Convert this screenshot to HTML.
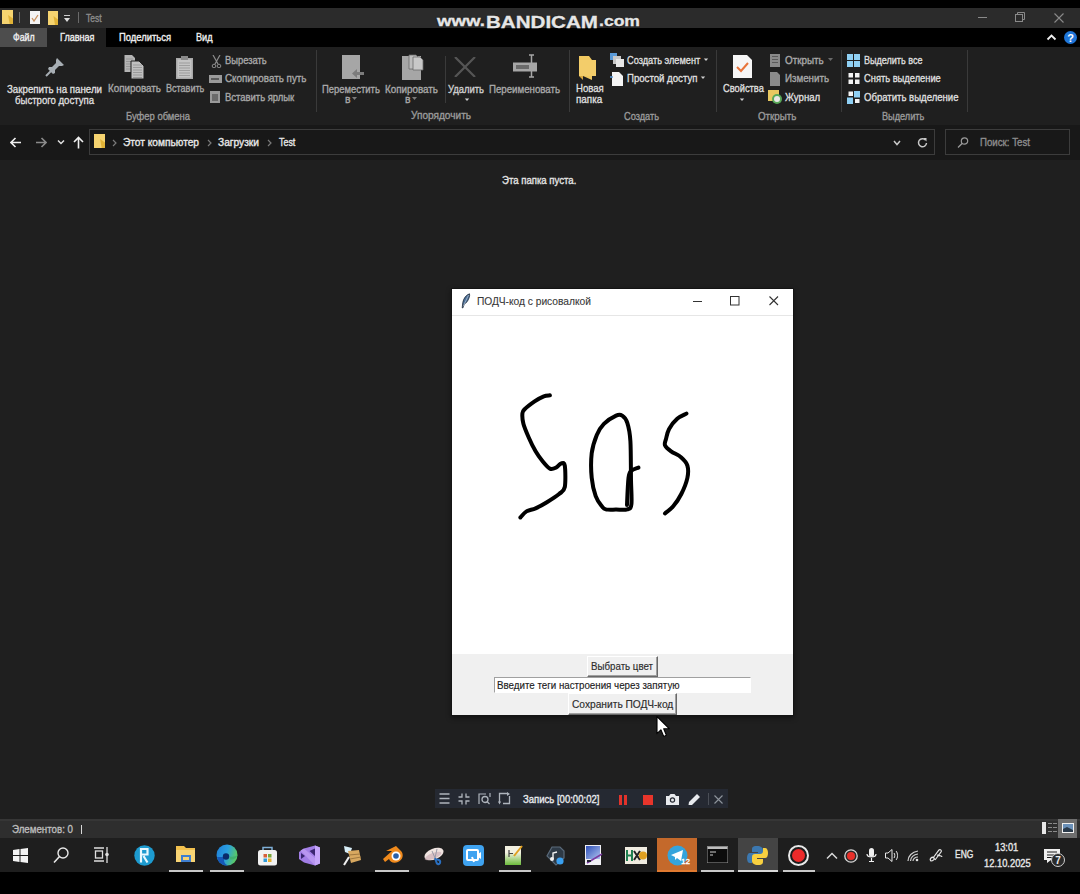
<!DOCTYPE html><html><head><meta charset="utf-8"><style>
html,body{margin:0;padding:0;width:1080px;height:894px;overflow:hidden;background:#191919;}
body{position:relative;font-family:"Liberation Sans",sans-serif;}
div,svg{position:absolute;}
.t{white-space:nowrap;line-height:1;transform-origin:0 0;-webkit-text-stroke:0.35px currentColor;}
</style></head><body>
<div style="left:0px;top:0px;width:1080px;height:8px;background:#000;"></div>
<div style="left:0px;top:8px;width:1080px;height:20px;background:#2b2b2b;"></div>
<div style="left:0px;top:28px;width:1080px;height:19px;background:#000;"></div>
<div style="left:0px;top:28px;width:47px;height:19px;background:#4d4d4d;"></div>
<div style="left:47px;top:28px;width:59px;height:19px;background:#1f1f1f;"></div>
<div style="left:0px;top:47px;width:1080px;height:78px;background:#1f1f1f;"></div>
<div style="left:0px;top:125px;width:1080px;height:35px;background:#181818;"></div>
<div style="left:0px;top:160px;width:1080px;height:659px;background:#1f1f1f;"></div>
<div style="left:0px;top:819px;width:1080px;height:19px;background:#2e2e2e;"></div>
<div style="left:0px;top:819px;width:1080px;height:2px;background:#363636;"></div>
<div style="left:0px;top:838px;width:1080px;height:34px;background:#1e1e1e;"></div>
<div style="left:0px;top:872px;width:1080px;height:22px;background:#000;"></div>
<svg style="left:2px;top:10px;" width="11" height="14" viewBox="0 0 11 14"><rect x="0" y="0" width="11" height="14" fill="#f6d470"/><path d="M6.050000000000001 4.8999999999999995 L11 8.4 L11 14 L7.699999999999999 14 Z" fill="#d9a520" opacity="0.7"/></svg>
<div style="left:19px;top:12px;width:1px;height:11px;background:#6a6a6a;"></div>
<svg style="left:30px;top:11px;" width="10" height="13" viewBox="0 0 10 13"><rect x="0" y="0" width="10" height="13" fill="#f4f4f4"/><path d="M2 7 L4 10 L8 4" stroke="#c89060" stroke-width="1.3" fill="none"/></svg>
<svg style="left:48px;top:11px;" width="10" height="14" viewBox="0 0 10 14"><rect x="0" y="0" width="10" height="14" fill="#f6d470"/><path d="M5.5 4.8999999999999995 L10 8.4 L10 14 L7.0 14 Z" fill="#d9a520" opacity="0.7"/></svg>
<svg style="left:63px;top:14px;" width="8" height="9" viewBox="0 0 8 9"><rect x="1" y="1" width="6" height="1" fill="#ccc"/><path d="M1 4 L7 4 L4 8 Z" fill="#ddd"/></svg>
<div style="left:78px;top:12px;width:1px;height:11px;background:#6a6a6a;"></div>
<div class="t" style="left:86px;top:12.91px;font-size:10.5px;color:#8c8c8c;transform:scaleX(0.8049);">Test</div>
<div style="left:978px;top:17px;width:9px;height:1px;background:#8a8a8a;"></div>
<svg style="left:1014px;top:11px;" width="12" height="11" viewBox="0 0 12 11"><rect x="1.5" y="3.5" width="7" height="7" fill="none" stroke="#8a8a8a"/><path d="M3.5 3.5 V1.5 H10.5 V8.5 H8.5" fill="none" stroke="#8a8a8a"/></svg>
<svg style="left:1054px;top:13px;" width="10" height="10" viewBox="0 0 10 10"><path d="M0.5 0.5 L9.5 9.5 M9.5 0.5 L0.5 9.5" stroke="#8a8a8a" stroke-width="1.1"/></svg>
<div class="t" style="left:436.5px;top:15.48px;font-size:13.85px;color:#e6e6e6;font-weight:bold;transform:scaleX(1.3462);text-shadow:0 0 1px #000,0 0 1px #000;">www.</div>
<div class="t" style="left:485.5px;top:13.62px;font-size:16.04px;color:#e6e6e6;font-weight:bold;transform:scaleX(1.2827);text-shadow:0 0 1px #000,0 0 1px #000;">BANDICAM</div>
<div class="t" style="left:599px;top:15.48px;font-size:13.85px;color:#e6e6e6;font-weight:bold;transform:scaleX(1.2683);text-shadow:0 0 1px #000,0 0 1px #000;">.com</div>
<div class="t" style="left:12.6px;top:31.71px;font-size:10.5px;color:#f0f0f0;transform:scaleX(0.8406);">Файл</div>
<div class="t" style="left:59.6px;top:31.71px;font-size:10.5px;color:#f0f0f0;transform:scaleX(0.8608);">Главная</div>
<div class="t" style="left:119.4px;top:31.71px;font-size:10.5px;color:#f0f0f0;transform:scaleX(0.8969);">Поделиться</div>
<div class="t" style="left:196px;top:31.71px;font-size:10.5px;color:#f0f0f0;transform:scaleX(0.8686);">Вид</div>
<svg style="left:1046px;top:33px;" width="11" height="8" viewBox="0 0 11 8"><path d="M1.5 6.5 L5.5 2.5 L9.5 6.5" stroke="#f0f0f0" stroke-width="1.8" fill="none"/></svg>
<svg style="left:1064px;top:31px;" width="13" height="13" viewBox="0 0 13 13"><circle cx="6.5" cy="6.5" r="6.5" fill="#1f75d8"/><text x="6.5" y="10.5" text-anchor="middle" font-family="Liberation Sans" font-weight="bold" font-size="11" fill="#fff">?</text></svg>
<div style="left:316px;top:50px;width:1px;height:62px;background:#3a3a3a;"></div>
<div style="left:569px;top:50px;width:1px;height:62px;background:#3a3a3a;"></div>
<div style="left:716px;top:50px;width:1px;height:62px;background:#3a3a3a;"></div>
<div style="left:841px;top:50px;width:1px;height:62px;background:#3a3a3a;"></div>
<div style="left:967px;top:50px;width:1px;height:62px;background:#3a3a3a;"></div>
<div style="left:445px;top:56px;width:1px;height:47px;background:#3a3a3a;"></div>
<svg style="left:44px;top:56px;" width="22" height="22" viewBox="0 0 22 22"><path d="M13 2 L20 9 L18 10 L15 10 L11 14 L11 17 L9 18 L4 13 L5 11 L8 11 L12 7 L12 4 Z" fill="#a7aeb4"/><path d="M7 15 L2 20" stroke="#a7aeb4" stroke-width="2"/></svg>
<div class="t" style="left:6.7px;top:83.81px;font-size:10.5px;color:#dedede;transform:scaleX(0.9263);">Закрепить на панели</div>
<div class="t" style="left:15px;top:94.71px;font-size:10.5px;color:#dedede;transform:scaleX(0.9126);">быстрого доступа</div>
<svg style="left:124px;top:55px;" width="21" height="25" viewBox="0 0 21 25"><path d="M0.5 0 H8 L11 3 V17 H0.5 Z" fill="#b4b4b4"/><path d="M2 4 H9" stroke="#8a8a8a" stroke-width="0.7"/><path d="M2 6.5 H9" stroke="#8a8a8a" stroke-width="0.7"/><path d="M2 9 H9" stroke="#8a8a8a" stroke-width="0.7"/><path d="M2 11.5 H9" stroke="#8a8a8a" stroke-width="0.7"/><path d="M2 14 H9" stroke="#8a8a8a" stroke-width="0.7"/><path d="M7 6 H15 L20 11 V24 H7 Z" fill="#c0c0c0" stroke="#1f1f1f" stroke-width="1"/><path d="M9 10 H18" stroke="#8a8a8a" stroke-width="0.7"/><path d="M9 12.5 H18" stroke="#8a8a8a" stroke-width="0.7"/><path d="M9 15 H18" stroke="#8a8a8a" stroke-width="0.7"/><path d="M9 17.5 H18" stroke="#8a8a8a" stroke-width="0.7"/><path d="M9 20 H18" stroke="#8a8a8a" stroke-width="0.7"/><path d="M9 22.5 H18" stroke="#8a8a8a" stroke-width="0.7"/></svg>
<div class="t" style="left:107.7px;top:83.01px;font-size:10.5px;color:#a8a8a8;transform:scaleX(0.9375);">Копировать</div>
<svg style="left:176px;top:56px;" width="17" height="23" viewBox="0 0 17 23"><rect x="0" y="2" width="17" height="21" fill="#a9a9a9"/><rect x="1.5" y="3.5" width="14" height="18" fill="#c4c4c4"/><path d="M3 7 H14" stroke="#8e8e8e" stroke-width="0.7"/><path d="M3 9.5 H14" stroke="#8e8e8e" stroke-width="0.7"/><path d="M3 12 H14" stroke="#8e8e8e" stroke-width="0.7"/><path d="M3 14.5 H14" stroke="#8e8e8e" stroke-width="0.7"/><path d="M3 17 H14" stroke="#8e8e8e" stroke-width="0.7"/><path d="M3 19.5 H14" stroke="#8e8e8e" stroke-width="0.7"/><rect x="5" y="0" width="7" height="4" fill="#8a8a8a"/></svg>
<div class="t" style="left:165.6px;top:83.01px;font-size:10.5px;color:#a8a8a8;transform:scaleX(0.8605);">Вставить</div>
<svg style="left:211px;top:55px;" width="11" height="13" viewBox="0 0 11 13"><path d="M2 0 L7 9 M9 0 L4 9" stroke="#8c8c8c" stroke-width="1.2"/><circle cx="3" cy="11" r="1.8" fill="none" stroke="#8c8c8c"/><circle cx="8" cy="11" r="1.8" fill="none" stroke="#8c8c8c"/></svg>
<div class="t" style="left:225.3px;top:55.11px;font-size:10.5px;color:#a8a8a8;transform:scaleX(0.8930);">Вырезать</div>
<svg style="left:209px;top:75px;" width="13" height="8" viewBox="0 0 13 8"><rect x="0" y="0" width="13" height="8" fill="#9a9a9a"/><rect x="2" y="3" width="8" height="2" fill="#5a5a5a"/></svg>
<div class="t" style="left:225.3px;top:73.41px;font-size:10.5px;color:#a8a8a8;transform:scaleX(0.9385);">Скопировать путь</div>
<svg style="left:210px;top:91px;" width="10" height="12" viewBox="0 0 10 12"><rect x="0" y="0" width="10" height="12" fill="#9a9a9a"/><rect x="2" y="3" width="6" height="7" fill="#6a6a6a"/></svg>
<div class="t" style="left:225.3px;top:91.71px;font-size:10.5px;color:#a8a8a8;transform:scaleX(0.9004);">Вставить ярлык</div>
<div class="t" style="left:125.5px;top:111.11px;font-size:10.5px;color:#9a9a9a;transform:scaleX(0.8971);">Буфер обмена</div>
<svg style="left:341px;top:55px;" width="24" height="25" viewBox="0 0 24 25"><rect x="1" y="0" width="18" height="24" fill="#a6a6a6"/><path d="M23 17 H16 V14 L11 18.5 L16 23 V20 H23 Z" fill="#7c7c7c"/></svg>
<div class="t" style="left:322px;top:83.81px;font-size:10.5px;color:#a8a8a8;transform:scaleX(0.8985);">Переместить</div>
<div class="t" style="left:345px;top:93.51px;font-size:10.5px;color:#a8a8a8;transform:scaleX(0.9860);">в</div>
<svg style="left:352px;top:97px;" width="5" height="4" viewBox="0 0 5 4"><path d="M0 0 H5 L2.5 3 Z" fill="#7a7a7a"/></svg>
<svg style="left:401px;top:54px;" width="23" height="26" viewBox="0 0 23 26"><rect x="1" y="2" width="19" height="24" fill="#a6a6a6"/><path d="M8 1 H15 L18 4 V15 H8 Z" fill="#bdbdbd" stroke="#6a6a6a" stroke-width="0.8"/><path d="M12 3 H19 L22 6 V16 H12 Z" fill="#c8c8c8" stroke="#6a6a6a" stroke-width="0.8"/></svg>
<div class="t" style="left:384.6px;top:83.81px;font-size:10.5px;color:#a8a8a8;transform:scaleX(0.9375);">Копировать</div>
<div class="t" style="left:405px;top:93.51px;font-size:10.5px;color:#a8a8a8;transform:scaleX(0.9860);">в</div>
<svg style="left:412px;top:97px;" width="5" height="4" viewBox="0 0 5 4"><path d="M0 0 H5 L2.5 3 Z" fill="#7a7a7a"/></svg>
<svg style="left:454px;top:57px;" width="22" height="20" viewBox="0 0 22 20"><path d="M1 0 L21 20 M21 0 L1 20" stroke="#555" stroke-width="2.2"/></svg>
<div class="t" style="left:448.4px;top:83.81px;font-size:10.5px;color:#cfcfcf;transform:scaleX(0.8980);">Удалить</div>
<svg style="left:464px;top:98px;" width="6" height="4" viewBox="0 0 6 4"><path d="M0.8 0.5 H5.2 L3 3 Z" fill="#d0d0d0"/></svg>
<svg style="left:512px;top:54px;" width="26" height="24" viewBox="0 0 26 24"><rect x="1" y="8.5" width="24" height="9" fill="#a6a6a6"/><rect x="4" y="11" width="13" height="4" fill="#6a6a6a"/><path d="M17 1 H22 M19.5 1 V23 M17 23 H22" stroke="#a6a6a6" stroke-width="1.5"/></svg>
<div class="t" style="left:489.3px;top:83.81px;font-size:10.5px;color:#a8a8a8;transform:scaleX(0.9224);">Переименовать</div>
<div class="t" style="left:411px;top:110.31px;font-size:10.5px;color:#9a9a9a;transform:scaleX(0.9603);">Упорядочить</div>
<svg style="left:579px;top:56px;" width="18" height="24" viewBox="0 0 18 24"><path d="M0 0 H10 L13 4 V24 L4 20 H0 Z" fill="#f0c860"/><rect x="0" y="4" width="17" height="16" fill="#f3cd6a"/><path d="M0 20 L4 24 V20 Z" fill="#d8a840"/></svg>
<div class="t" style="left:575.7px;top:83.31px;font-size:10.5px;color:#dedede;transform:scaleX(0.9142);">Новая</div>
<div class="t" style="left:575.7px;top:94.01px;font-size:10.5px;color:#dedede;transform:scaleX(0.9435);">папка</div>
<svg style="left:610px;top:53px;" width="14" height="14" viewBox="0 0 14 14"><rect x="0" y="0" width="7" height="7" fill="#5a9ad8"/><rect x="3" y="3" width="8" height="8" fill="#c8c8c8"/><rect x="6" y="6" width="8" height="8" fill="#e8e8e8"/></svg>
<div class="t" style="left:626.8px;top:54.71px;font-size:10.5px;color:#dedede;transform:scaleX(0.8758);">Создать элемент</div>
<svg style="left:703px;top:58px;" width="6" height="4" viewBox="0 0 6 4"><path d="M0.8 0.5 H5.2 L3 3 Z" fill="#d0d0d0"/></svg>
<svg style="left:610px;top:72px;" width="13" height="14" viewBox="0 0 13 14"><path d="M2 0 H9 L13 4 V14 H2 Z" fill="#f4f4f4"/><path d="M0 5 H3" stroke="#5a9ad8" stroke-width="1.5"/></svg>
<div class="t" style="left:626.8px;top:72.71px;font-size:10.5px;color:#dedede;transform:scaleX(0.9159);">Простой доступ</div>
<svg style="left:700px;top:76px;" width="6" height="4" viewBox="0 0 6 4"><path d="M0.8 0.5 H5.2 L3 3 Z" fill="#d0d0d0"/></svg>
<div class="t" style="left:624.3px;top:110.61px;font-size:10.5px;color:#9a9a9a;transform:scaleX(0.8772);">Создать</div>
<svg style="left:733px;top:55px;" width="19" height="23" viewBox="0 0 19 23"><path d="M0 0 H14 L19 5 V23 H0 Z" fill="#f6f6f6"/><path d="M4 12 L8 16 L15 8" stroke="#e8743b" stroke-width="2" fill="none"/></svg>
<div class="t" style="left:722.5px;top:83.31px;font-size:10.5px;color:#dedede;transform:scaleX(0.8849);">Свойства</div>
<svg style="left:739px;top:98px;" width="6" height="4" viewBox="0 0 6 4"><path d="M0.8 0.5 H5.2 L3 3 Z" fill="#d0d0d0"/></svg>
<svg style="left:770px;top:54px;" width="11" height="13" viewBox="0 0 11 13"><rect x="0" y="0" width="10" height="13" fill="#8a8a8a"/><rect x="2" y="2" width="6" height="1" fill="#5a5a5a"/><rect x="2" y="5" width="6" height="1" fill="#5a5a5a"/><rect x="2" y="8" width="6" height="1" fill="#5a5a5a"/></svg>
<div class="t" style="left:784.9px;top:55.11px;font-size:10.5px;color:#a8a8a8;transform:scaleX(0.9385);">Открыть</div>
<svg style="left:828px;top:58px;" width="5" height="3" viewBox="0 0 5 3"><path d="M0 0 H5 L2.5 3 Z" fill="#6a6a6a"/></svg>
<svg style="left:770px;top:72px;" width="11" height="14" viewBox="0 0 11 14"><path d="M0 0 H7 L10 3 V14 H0 Z" fill="#8a8a8a"/></svg>
<div class="t" style="left:784.9px;top:73.41px;font-size:10.5px;color:#a8a8a8;transform:scaleX(0.9290);">Изменить</div>
<svg style="left:768px;top:90px;" width="15" height="14" viewBox="0 0 15 14"><rect x="0" y="0" width="11" height="11" fill="#e8c860"/><circle cx="9" cy="9" r="5" fill="#58a858"/><circle cx="9" cy="9" r="3" fill="#e8e8e8"/></svg>
<div class="t" style="left:784.9px;top:91.71px;font-size:10.5px;color:#dedede;transform:scaleX(0.9187);">Журнал</div>
<div class="t" style="left:758.4px;top:111.11px;font-size:10.5px;color:#9a9a9a;transform:scaleX(0.9288);">Открыть</div>
<svg style="left:847px;top:54px;" width="14" height="14" viewBox="0 0 14 14"><rect x="0" y="0" width="6" height="6" fill="#8fd0f4"/><rect x="7" y="0" width="6" height="6" fill="#8fd0f4"/><rect x="0" y="7" width="6" height="6" fill="#8fd0f4"/><rect x="7" y="7" width="6" height="6" fill="#8fd0f4"/></svg>
<div class="t" style="left:863.5px;top:55.11px;font-size:10.5px;color:#dedede;transform:scaleX(0.8615);">Выделить все</div>
<svg style="left:847px;top:72px;" width="14" height="14" viewBox="0 0 14 14"><rect x="1.5" y="1" width="4.5" height="4.5" fill="#f4f4f4"/><rect x="8" y="1" width="4.5" height="4.5" fill="#f4f4f4"/><rect x="1.5" y="7.5" width="4.5" height="4.5" fill="#f4f4f4"/><rect x="8" y="7.5" width="4.5" height="4.5" fill="#f4f4f4"/></svg>
<div class="t" style="left:863.5px;top:73.41px;font-size:10.5px;color:#dedede;transform:scaleX(0.8881);">Снять выделение</div>
<svg style="left:847px;top:91px;" width="14" height="14" viewBox="0 0 14 14"><rect x="1.5" y="0.5" width="4.5" height="4.5" fill="#f4f4f4"/><rect x="7" y="0" width="6" height="6.5" fill="#8fd0f4"/><rect x="0" y="6.5" width="6" height="6.5" fill="#8fd0f4"/><rect x="8" y="8" width="4.5" height="4" fill="#f4f4f4"/></svg>
<div class="t" style="left:863.5px;top:91.71px;font-size:10.5px;color:#dedede;transform:scaleX(0.9112);">Обратить выделение</div>
<div class="t" style="left:881.8px;top:111.11px;font-size:10.5px;color:#9a9a9a;transform:scaleX(0.8712);">Выделить</div>
<svg style="left:10px;top:137px;" width="12" height="11" viewBox="0 0 12 11"><path d="M1 5.5 H11 M5.5 1 L1 5.5 L5.5 10" stroke="#f0f0f0" stroke-width="1.6" fill="none"/></svg>
<svg style="left:35px;top:137px;" width="12" height="11" viewBox="0 0 12 11"><path d="M11 5.5 H1 M6.5 1 L11 5.5 L6.5 10" stroke="#8a8a8a" stroke-width="1.6" fill="none"/></svg>
<svg style="left:57px;top:139px;" width="8" height="6" viewBox="0 0 8 6"><path d="M1 1.5 L4 4.5 L7 1.5" stroke="#e0e0e0" stroke-width="1.5" fill="none"/></svg>
<svg style="left:73px;top:136px;" width="11" height="13" viewBox="0 0 11 13"><path d="M5.5 12.5 V1.5 M1 6 L5.5 1.5 L10 6" stroke="#f0f0f0" stroke-width="1.6" fill="none"/></svg>
<div style="left:89px;top:129px;width:846px;height:26px;background:transparent;box-sizing:border-box;border:1px solid #3c3c3c;"></div>
<svg style="left:94px;top:134px;" width="11" height="14" viewBox="0 0 11 14"><rect x="0" y="0" width="11" height="14" fill="#f6d470"/><path d="M6.050000000000001 4.8999999999999995 L11 8.4 L11 14 L7.699999999999999 14 Z" fill="#d9a520" opacity="0.7"/></svg>
<svg style="left:111.5px;top:139px;" width="5" height="8" viewBox="0 0 5 8"><path d="M1 1 L4 4 L1 7" stroke="#7a7a7a" stroke-width="1.2" fill="none"/></svg>
<svg style="left:206.5px;top:139px;" width="5" height="8" viewBox="0 0 5 8"><path d="M1 1 L4 4 L1 7" stroke="#7a7a7a" stroke-width="1.2" fill="none"/></svg>
<svg style="left:267px;top:139px;" width="5" height="8" viewBox="0 0 5 8"><path d="M1 1 L4 4 L1 7" stroke="#7a7a7a" stroke-width="1.2" fill="none"/></svg>
<div class="t" style="left:122.8px;top:137.01px;font-size:10.5px;color:#e8e8e8;transform:scaleX(0.9680);">Этот компьютер</div>
<div class="t" style="left:218px;top:137.01px;font-size:10.5px;color:#e8e8e8;transform:scaleX(0.9703);">Загрузки</div>
<div class="t" style="left:279.3px;top:137.01px;font-size:10.5px;color:#e8e8e8;transform:scaleX(0.8465);">Test</div>
<svg style="left:893px;top:140px;" width="8" height="6" viewBox="0 0 8 6"><path d="M1 1 L4 4.5 L7 1" stroke="#c8c8c8" stroke-width="1.5" fill="none"/></svg>
<svg style="left:917px;top:137px;" width="11" height="11" viewBox="0 0 11 11"><path d="M8.5 3 A4 4 0 1 0 9.5 6" stroke="#c8c8c8" stroke-width="1.5" fill="none"/><path d="M6 1 L9.5 1 L9.5 4.5 Z" fill="#c8c8c8"/></svg>
<div style="left:945px;top:129px;width:125px;height:26px;background:transparent;box-sizing:border-box;border:1px solid #3c3c3c;"></div>
<svg style="left:957px;top:137px;" width="12" height="11" viewBox="0 0 12 11"><circle cx="7.5" cy="4" r="3.2" stroke="#9a9a9a" stroke-width="1.2" fill="none"/><path d="M5.3 6.3 L1 10.5" stroke="#9a9a9a" stroke-width="1.3"/></svg>
<div class="t" style="left:980px;top:137.01px;font-size:10.5px;color:#8c8c8c;transform:scaleX(0.9227);">Поиск: Test</div>
<div class="t" style="left:501.7px;top:174.71px;font-size:10.5px;color:#e4e4e4;transform:scaleX(0.9138);">Эта папка пуста.</div>
<div class="t" style="left:11.7px;top:823.51px;font-size:10.5px;color:#bdbdbd;transform:scaleX(0.9270);">Элементов: 0</div>
<div style="left:81px;top:825px;width:1px;height:9px;background:#d8d8d8;"></div>
<svg style="left:1042px;top:822px;" width="15" height="12" viewBox="0 0 15 12"><rect x="0" y="0" width="4" height="12" fill="#e8e8e8"/><rect x="6" y="1" width="4" height="1" fill="#8a8a8a"/><rect x="11" y="1" width="4" height="1" fill="#8a8a8a"/><rect x="6" y="5" width="4" height="1" fill="#8a8a8a"/><rect x="11" y="5" width="4" height="1" fill="#8a8a8a"/><rect x="6" y="9" width="4" height="1" fill="#8a8a8a"/><rect x="11" y="9" width="4" height="1" fill="#8a8a8a"/></svg>
<div style="left:1058px;top:819px;width:19px;height:19px;background:#6e6e6e;"></div>
<svg style="left:1062px;top:823px;" width="12" height="10" viewBox="0 0 12 10"><rect x="0" y="0" width="12" height="10" fill="#f0f0f0"/><rect x="1" y="1" width="10" height="8" fill="#6a90b8"/><path d="M1 6 L5 4 L11 7 V9 H1 Z" fill="#2a3a4a"/></svg>
<div style="left:451px;top:288px;width:343px;height:428px;background:#141414;box-shadow:0 2px 5px rgba(0,0,0,0.45);"></div>
<div style="left:452px;top:289px;width:341px;height:426px;background:#ffffff;"></div>
<div style="left:452px;top:315px;width:341px;height:1px;background:#e6e6e6;"></div>
<svg style="left:460px;top:293px;" width="11" height="16" viewBox="0 0 11 16"><path d="M9.5 0.8 C6 2 3.5 5.5 2.8 9.5 L2.2 14.8 L3 14.8 L4.2 11.2 C6.5 10 8.2 7.5 9.2 4.5 C9.6 3 9.8 1.8 9.5 0.8 Z" fill="#4a6e96" stroke="#1e2a38" stroke-width="0.8"/><path d="M8.5 2 L3.2 13.5" stroke="#c8d4e0" stroke-width="0.6"/></svg>
<div class="t" style="left:476.9px;top:295.91px;font-size:10.5px;color:#383838;transform:scaleX(0.9743);-webkit-text-stroke:0.1px currentColor;">ПОДЧ-код с рисовалкой</div>
<div style="left:693px;top:301px;width:9px;height:1px;background:#333;"></div>
<svg style="left:730px;top:296px;" width="10" height="10" viewBox="0 0 10 10"><rect x="0.5" y="0.5" width="8.5" height="8.5" stroke="#333" stroke-width="1" fill="none"/></svg>
<svg style="left:769px;top:296px;" width="10" height="10" viewBox="0 0 10 10"><path d="M0.5 0.5 L9 9 M9 0.5 L0.5 9" stroke="#333" stroke-width="1.1"/></svg>
<div style="left:452px;top:654px;width:341px;height:61px;background:#f0f0f0;"></div>
<svg style="left:500px;top:380px;" width="200" height="150" viewBox="0 0 200 150"><path d="M49.9 15.3 C48.9 15.5 46.3 15.3 43.8 16.3 C41.2 17.3 37.8 19.2 34.6 21.4 C31.4 23.6 26.4 27.5 24.4 29.5 C22.4 31.5 22.6 31.2 22.4 33.6 C22.2 36.0 22.4 39.9 23.4 43.8 C24.4 47.7 26.5 52.4 28.5 57.0 C30.5 61.6 33.2 67.2 35.6 71.3 C38.0 75.4 40.4 78.6 42.8 81.5 C45.2 84.4 47.7 87.6 49.9 88.6 C52.1 89.6 54.1 88.5 56.0 87.6 C57.9 86.8 59.6 83.8 61.1 83.5 C62.6 83.2 64.2 81.7 64.8 85.6 C65.4 89.5 65.7 102.3 64.8 107.0 C63.8 111.7 62.1 111.5 59.1 114.0 C56.1 116.5 50.8 119.8 46.9 122.2 C43.0 124.6 39.0 126.8 35.6 128.3 C32.2 129.8 29.0 129.9 26.5 131.4 C24.0 132.9 21.4 136.5 20.4 137.5" fill="none" stroke="#000" stroke-width="4" stroke-linejoin="round" stroke-linecap="round"/><path d="M105.9 129.4 C108.2 129.9 112.4 129.6 116.0 129.6 C119.6 129.6 124.7 130.3 127.3 129.4 C129.9 128.5 130.8 129.2 131.4 124.3 C132.0 119.4 131.2 110.5 131.0 100.0 C130.8 89.5 131.0 70.6 130.4 61.1 C129.8 51.6 128.7 47.1 127.3 42.8 C125.9 38.6 124.1 36.8 122.2 35.6 C120.3 34.4 119.2 34.2 116.1 35.6 C113.1 37.0 107.1 40.6 103.9 43.8 C100.7 47.0 98.8 50.1 96.8 55.0 C94.8 59.9 92.6 66.2 91.7 73.3 C90.9 80.4 91.0 90.7 91.7 97.8 C92.4 104.9 94.0 111.4 95.7 116.1 C97.4 120.9 100.2 124.1 101.9 126.3 C103.6 128.5 103.5 128.8 105.9 129.4" fill="none" stroke="#000" stroke-width="4" stroke-linejoin="round" stroke-linecap="round"/><path d="M127.0 125.0 C127.2 120.5 127.8 103.7 128.5 98.0 C129.2 92.3 129.3 92.7 131.0 91.0 C132.7 89.3 137.2 88.2 138.5 87.6" fill="none" stroke="#000" stroke-width="4" stroke-linejoin="round" stroke-linecap="round"/><path d="M186.4 33.6 C184.9 34.5 180.1 36.1 177.2 38.7 C174.3 41.2 171.0 45.5 169.1 48.9 C167.2 52.3 166.7 56.4 166.0 59.1 C165.3 61.8 164.2 63.2 165.0 65.2 C165.8 67.2 168.4 69.3 171.1 71.3 C173.8 73.3 178.6 75.0 181.3 77.4 C184.0 79.8 186.4 82.2 187.4 85.6 C188.4 89.0 188.4 93.1 187.4 97.8 C186.4 102.5 183.7 109.2 181.3 114.0 C178.9 118.8 175.9 123.1 173.2 126.3 C170.5 129.5 166.4 132.2 165.0 133.4" fill="none" stroke="#000" stroke-width="4" stroke-linejoin="round" stroke-linecap="round"/></svg>
<div style="left:587px;top:656px;width:71px;height:21px;box-sizing:border-box;background:#f0f0f0;border-top:1px solid #fff;border-left:1px solid #fff;border-right:1px solid #696969;border-bottom:1px solid #696969;box-shadow:inset -1px -1px 0 #a0a0a0;"></div>
<div class="t" style="left:591px;top:661.11px;font-size:10.5px;color:#2c2c2c;transform:scaleX(0.9256);-webkit-text-stroke:0.15px currentColor;">Выбрать цвет</div>
<div style="left:494px;top:677px;width:257px;height:16px;box-sizing:border-box;background:#fff;border-top:1px solid #a0a0a0;border-left:1px solid #a0a0a0;border-right:1px solid #fff;border-bottom:1px solid #fff;"></div>
<div class="t" style="left:496.7px;top:679.61px;font-size:10.5px;color:#1c1c1c;transform:scaleX(0.9283);-webkit-text-stroke:0.15px currentColor;">Введите теги настроения через запятую</div>
<div style="left:568px;top:693px;width:109px;height:22px;box-sizing:border-box;background:#f0f0f0;border-top:1px solid #fff;border-left:1px solid #fff;border-right:1px solid #696969;border-bottom:1px solid #696969;box-shadow:inset -1px -1px 0 #a0a0a0;"></div>
<div class="t" style="left:571.6px;top:698.91px;font-size:10.5px;color:#2c2c2c;transform:scaleX(0.9715);-webkit-text-stroke:0.15px currentColor;">Сохранить ПОДЧ-код</div>
<svg style="left:656px;top:715px;" width="16" height="24" viewBox="0 0 16 24"><path d="M1 1.5 V18.7 L4.9 14.8 L7.7 21.4 L10.4 20.3 L7.7 13.7 H13.2 Z" fill="#fff" stroke="#000" stroke-width="1.1" stroke-linejoin="round"/></svg>
<div style="left:435px;top:789px;width:293px;height:19px;background:#252932;"></div>
<svg style="left:439px;top:793px;" width="11" height="12" viewBox="0 0 11 12"><path d="M0.5 1 H10.5 M0.5 5.5 H10.5 M0.5 10 H10.5" stroke="#aeb4bc" stroke-width="1.3"/></svg>
<svg style="left:458px;top:793px;" width="12" height="12" viewBox="0 0 12 12"><path d="M0.5 4 H4 V0.5 M11.5 4 H8 V0.5 M0.5 8 H4 V11.5 M11.5 8 H8 V11.5" stroke="#aeb4bc" stroke-width="1.3" fill="none"/></svg>
<svg style="left:478px;top:792px;" width="13" height="13" viewBox="0 0 13 13"><path d="M1 12 V2 H8 M12 1 V5" stroke="#aeb4bc" stroke-width="1.2" fill="none"/><circle cx="7" cy="7.5" r="3" stroke="#aeb4bc" stroke-width="1.3" fill="none"/><path d="M9 9.5 L11.5 12" stroke="#aeb4bc" stroke-width="1.3"/></svg>
<svg style="left:498px;top:792px;" width="13" height="13" viewBox="0 0 13 13"><path d="M1.5 11 V1.5 H10 M11.5 4 V11.5 H5" stroke="#aeb4bc" stroke-width="1.3" fill="none"/><path d="M9 0 L12 2 L9 4 Z M0 9.5 L3 9.5 L1.5 12.5 Z" fill="#aeb4bc"/></svg>
<div class="t" style="left:523.3px;top:793.71px;font-size:10.5px;color:#e8eaee;transform:scaleX(0.9087);">Запись [00:00:02]</div>
<div style="left:619px;top:795px;width:3px;height:10px;background:#e2332b;"></div>
<div style="left:624px;top:795px;width:3px;height:10px;background:#e2332b;"></div>
<div style="left:643px;top:795px;width:10px;height:10px;background:#e8352b;"></div>
<svg style="left:666px;top:793px;" width="13" height="12" viewBox="0 0 13 12"><path d="M0 3 H3 L4.5 1 H8.5 L10 3 H13 V12 H0 Z" fill="#e8eaee"/><circle cx="6.5" cy="7" r="2.7" fill="#252932"/><circle cx="6.5" cy="7" r="1.5" fill="#e8eaee"/></svg>
<svg style="left:688px;top:793px;" width="13" height="12" viewBox="0 0 13 12"><path d="M1 9 L9 1 L12 4 L4 12 L0.5 12 Z" fill="#e8eaee"/></svg>
<div style="left:708px;top:793px;width:1px;height:12px;background:#4a4e56;"></div>
<svg style="left:714px;top:795px;" width="9" height="9" viewBox="0 0 9 9"><path d="M0.5 0.5 L8.5 8.5 M8.5 0.5 L0.5 8.5" stroke="#8e949c" stroke-width="1.1"/></svg>
<svg style="left:13px;top:848px;" width="15" height="15" viewBox="0 0 15 15"><path d="M0 2 L6.5 1 V7 H0 Z M7.5 0.9 L15 0 V7 H7.5 Z M0 8 H6.5 V14 L0 13 Z M7.5 8 H15 V15 L7.5 14.1 Z" fill="#f4f4f4"/></svg>
<svg style="left:53px;top:847px;" width="16" height="17" viewBox="0 0 16 17"><circle cx="10" cy="6" r="5" stroke="#e8e8e8" stroke-width="1.4" fill="none"/><path d="M6.5 9.5 L1 15.5" stroke="#e8e8e8" stroke-width="1.6"/></svg>
<svg style="left:93px;top:847px;" width="16" height="16" viewBox="0 0 16 16"><path d="M1 1 H11 M1 14 H11" stroke="#e0e0e0" stroke-width="1.3"/><rect x="2.5" y="4" width="7" height="7" stroke="#e0e0e0" stroke-width="1.3" fill="none"/><path d="M14 0 V16" stroke="#e0e0e0" stroke-width="1.3"/><circle cx="14" cy="7.5" r="1.8" fill="#e0e0e0"/></svg>
<svg style="left:134px;top:845px;" width="21" height="21" viewBox="0 0 21 21"><circle cx="10.5" cy="10.5" r="10.2" fill="#1d9bd0"/><path d="M7 17.5 V4 H13.5 V9.5 H8 M9.5 11 L13.5 17.5" stroke="#e8f8ff" stroke-width="2.2" fill="none"/><path d="M9 6.5 H12" stroke="#1d9bd0" stroke-width="1.2"/></svg>
<svg style="left:176px;top:846px;" width="20" height="17" viewBox="0 0 20 17"><path d="M0 0 H8 L10 2 H19 V16 H0 Z" fill="#f2c14e"/><rect x="0" y="4" width="19" height="12" fill="#f8d474"/><rect x="5" y="9" width="10" height="7" fill="#3f7fd0"/><rect x="7" y="11" width="6" height="3" fill="#f8d474"/></svg>
<div style="left:169px;top:870px;width:34px;height:2px;background:#c8c8c8;"></div>
<svg style="left:216px;top:844px;" width="22" height="22" viewBox="0 0 22 22"><defs><linearGradient id="eg" x1="0" y1="0" x2="1" y2="0.3"><stop offset="0" stop-color="#1f7fd8"/><stop offset="0.55" stop-color="#2a9fe0"/><stop offset="1" stop-color="#58c868"/></linearGradient></defs><circle cx="11" cy="11" r="10.5" fill="url(#eg)"/><path d="M1 13 C2 19 7 22 12 21.5 C8 20 7 16 9 13 Z" fill="#1558b8"/><circle cx="10" cy="12.5" r="3.2" fill="#0a2a6a"/><path d="M13.5 12.5 C17 13 20 12.5 21.5 11 C21 14 18 16 14 15.5 Z" fill="#40b070"/></svg>
<div style="left:210px;top:870px;width:34px;height:2px;background:#c8c8c8;"></div>
<svg style="left:257px;top:845px;" width="21" height="21" viewBox="0 0 21 21"><path d="M6 6 V2.5 H15 V6" stroke="#7fb0d8" stroke-width="1.5" fill="none"/><rect x="1" y="5" width="19" height="15.5" rx="2.5" fill="#f2f2f2"/><rect x="6.5" y="9" width="3.5" height="3.5" fill="#d8603a"/><rect x="11" y="9" width="3.5" height="3.5" fill="#7aa83a"/><rect x="6.5" y="13.5" width="3.5" height="3.5" fill="#2f9ad8"/><rect x="11" y="13.5" width="3.5" height="3.5" fill="#e8b030"/></svg>
<svg style="left:299px;top:845px;" width="22" height="21" viewBox="0 0 22 21"><path d="M0 7 L5 3.5 L16 0.5 L21 2.5 V18.5 L16 20.5 L5 17.5 L0 14 Z" fill="#a27ee6"/><path d="M2 8 L6 11 L2 14 Z" fill="#3a2670"/><path d="M10.5 6 L16 3.5 V11 Z" fill="#3a2670"/><path d="M1.5 5.5 L5 3.5 L16 13 V20.5 Z" fill="#b896f0"/><path d="M16 0.5 L21 2.5 V18.5 L16 20.5 Z" fill="#c6a6fa"/></svg>
<svg style="left:342px;top:845px;" width="20" height="21" viewBox="0 0 20 21"><path d="M2 1 L10 3 L8 9 L3 7 Z" fill="#d8eef8"/><path d="M6 6 L17 5 L19 15 L9 18 Z" fill="#d8a860"/><path d="M7 10 L18 9 M8 14 L19 12" stroke="#a07840" stroke-width="1"/><path d="M7 12 L2 20" stroke="#f0f0f0" stroke-width="2"/></svg>
<svg style="left:382px;top:845px;" width="22" height="20" viewBox="0 0 22 20"><path d="M1 14 L10 6 L4 6 L14 1 L19 6 C22 9 21 15 16 17 C12 19 8 17 7 14 L3 17 Z" fill="#f08a1c"/><circle cx="14" cy="11" r="4.5" fill="#fff"/><circle cx="14" cy="11" r="2.8" fill="#2a5fa8"/></svg>
<div style="left:375px;top:870px;width:34px;height:2px;background:#c8c8c8;"></div>
<svg style="left:423px;top:845px;" width="22" height="21" viewBox="0 0 22 21"><ellipse cx="11" cy="9" rx="10" ry="5.5" fill="#f0e4e0" transform="rotate(-22 11 9)"/><ellipse cx="10" cy="11" rx="9" ry="3" fill="#c8a8b0" transform="rotate(-22 10 11)" opacity="0.6"/><path d="M9 6 L12 13 M14 4 L12 13" stroke="#9a9aa8" stroke-width="1"/><path d="M12 13 L14 19 M12 15 C15 14 18 15 17 18 C16 20 13 19 14 17" stroke="#2a6fc0" stroke-width="2" fill="none"/></svg>
<svg style="left:463px;top:845px;" width="21" height="21" viewBox="0 0 21 21"><rect x="0" y="0" width="21" height="21" rx="4" fill="#3fa3f0"/><rect x="4" y="5" width="11" height="10" rx="1" stroke="#fff" stroke-width="2" fill="none"/><path d="M15 9 L18 7 V14 L15 12 Z" fill="#fff"/><path d="M9 12 L11 17" stroke="#fff" stroke-width="2"/></svg>
<svg style="left:505px;top:844px;" width="19" height="22" viewBox="0 0 19 22"><defs><linearGradient id="np" x1="0" y1="0" x2="0" y2="1"><stop offset="0.35" stop-color="#f2f0e0"/><stop offset="1" stop-color="#6cbc3c"/></linearGradient></defs><rect x="0" y="2" width="16" height="19" fill="url(#np)"/><path d="M4 6 V13 M4 9.5 H8" stroke="#444" stroke-width="1.2"/><path d="M9 12 L17 2" stroke="#e0a020" stroke-width="2"/></svg>
<div style="left:499px;top:870px;width:32px;height:2px;background:#c8c8c8;"></div>
<svg style="left:545px;top:845px;" width="21" height="21" viewBox="0 0 21 21"><path d="M7 2 H15 L19 6 V13 L11 20 L2 11 Z" fill="#2e3a46" stroke="#5a6a7a" stroke-width="1.2"/><path d="M8 14 V8 L12 7" stroke="#f0f0f0" stroke-width="1.4" fill="none"/><circle cx="7" cy="14" r="2" fill="#f0f0f0"/><circle cx="15" cy="16" r="3.6" fill="#3aa0f0"/></svg>
<svg style="left:585px;top:845px;" width="18" height="21" viewBox="0 0 18 21"><defs><linearGradient id="pg" x1="0" y1="0" x2="1" y2="1"><stop offset="0" stop-color="#2f50b8"/><stop offset="1" stop-color="#b0c4f0"/></linearGradient></defs><rect x="0" y="0" width="16" height="20" fill="#f0f0f4"/><rect x="1" y="1" width="14" height="13" fill="url(#pg)"/><path d="M2 18 L17 9" stroke="#7a3aa0" stroke-width="1.5"/><rect x="2" y="15" width="4" height="2" fill="#223"/></svg>
<svg style="left:625px;top:847px;" width="22" height="17" viewBox="0 0 22 17"><rect x="0" y="0" width="22" height="17" fill="#f0ece0"/><path d="M2 3 V14 M2 8.5 H7 M7 3 V14" stroke="#208050" stroke-width="2"/><path d="M9 4 L15 13 M15 4 L9 13" stroke="#222" stroke-width="2"/><circle cx="18" cy="8.5" r="4" fill="#e0a020"/></svg>
<div style="left:657px;top:838px;width:40px;height:34px;background:#c4692b;"></div>
<svg style="left:667px;top:845px;" width="21" height="21" viewBox="0 0 21 21"><circle cx="10.5" cy="10.5" r="10" fill="#35a4dc"/><path d="M4 10 L16 5 L14 16 L10 13 L8 15 L8 12 Z" fill="#fff"/></svg>
<div style="left:657px;top:870px;width:40px;height:2px;background:#e07a30;"></div>
<div class="t" style="left:681px;top:858.13px;font-size:7.64px;color:#fff;transform:scaleX(1.0592);">12</div>
<svg style="left:707px;top:846px;" width="21" height="17" viewBox="0 0 21 17"><rect x="0" y="0" width="21" height="17" fill="#0c0c0c" stroke="#9a9a9a" stroke-width="1"/><rect x="0.5" y="0.5" width="20" height="2.5" fill="#bdbdbd"/><path d="M3 6 H9 M3 9 H6" stroke="#cfcfcf" stroke-width="1"/></svg>
<div style="left:701px;top:870px;width:33px;height:2px;background:#c8c8c8;"></div>
<div style="left:738px;top:838px;width:40px;height:34px;background:#444444;"></div>
<svg style="left:747px;top:845px;" width="21" height="21" viewBox="0 0 21 21"><path d="M10 1 C5 1 5 3 5 5 V7 H11 V8 H3 C1 8 0 10 0 13 C0 16 1 18 3 18 H5 V15 C5 13 6 12 8 12 H13 C15 12 16 11 16 9 V5 C16 3 14 1 10 1 Z" fill="#3c78b0"/><path d="M11 20 C16 20 16 18 16 16 V14 H10 V13 H18 C20 13 21 11 21 8 C21 5 20 3 18 3 H16 V6 C16 8 15 9 13 9 H8 C6 9 5 10 5 12 V16 C5 18 7 20 11 20 Z" fill="#f8d040"/></svg>
<div style="left:738px;top:870px;width:40px;height:2px;background:#d8d8d8;"></div>
<svg style="left:788px;top:845px;" width="21" height="21" viewBox="0 0 21 21"><circle cx="10.5" cy="10.5" r="9.5" fill="#1c1c1c" stroke="#e8e8e8" stroke-width="2"/><circle cx="10.5" cy="10.5" r="6.5" fill="#ec2a2a"/></svg>
<div style="left:783px;top:870px;width:32px;height:2px;background:#c8c8c8;"></div>
<svg style="left:826px;top:851px;" width="12" height="9" viewBox="0 0 12 9"><path d="M1 7.5 L6 2.5 L11 7.5" stroke="#d8d8d8" stroke-width="1.5" fill="none"/></svg>
<svg style="left:844px;top:849px;" width="14" height="14" viewBox="0 0 14 14"><circle cx="7" cy="7" r="6.2" fill="#2a2a2a" stroke="#d8d8d8" stroke-width="1.3"/><circle cx="7" cy="7" r="4" fill="#e8302a"/></svg>
<svg style="left:866px;top:848px;" width="11" height="15" viewBox="0 0 11 15"><rect x="3" y="0" width="5" height="9" rx="2.5" fill="#f0f0f0"/><path d="M1 6 C1 10 10 10 10 6 M5.5 10 V13 M3 13.5 H8" stroke="#f0f0f0" stroke-width="1.2" fill="none"/></svg>
<svg style="left:885px;top:849px;" width="14" height="13" viewBox="0 0 14 13"><path d="M0.5 4 H3 L7 0.5 V12.5 L3 9 H0.5 Z" stroke="#e8e8e8" stroke-width="1" fill="none"/><path d="M9 4 C10 5 10 8 9 9 M11 2 C13 4 13 9 11 11" stroke="#e8e8e8" stroke-width="1" fill="none"/></svg>
<svg style="left:907px;top:849px;" width="12" height="13" viewBox="0 0 12 13"><path d="M1 12 C1 7 5 3 11 2 M3.5 12 C3.5 8.5 6.5 5.5 11 5 M6 12 C6 10 8 8 11 8" stroke="#d0d0d0" stroke-width="1.2" fill="none"/><circle cx="10" cy="11" r="1.3" fill="#e0e0e0"/></svg>
<svg style="left:929px;top:848px;" width="14" height="15" viewBox="0 0 14 15"><path d="M2 13 C0 11 3 8 5 10 C6 11 4 13 2 13 Z M4 10 L10 2 C11 1 13 2 12 4 L6 12 M8 7 C10 8 13 7 13 9" stroke="#e8e8e8" stroke-width="1.2" fill="none"/></svg>
<div class="t" style="left:955px;top:849.01px;font-size:10.5px;color:#e8e8e8;transform:scaleX(0.8043);">ENG</div>
<div class="t" style="left:995.4px;top:841.71px;font-size:10.5px;color:#e8e8e8;transform:scaleX(0.8868);">13:01</div>
<div class="t" style="left:984.3px;top:857.61px;font-size:10.5px;color:#e8e8e8;transform:scaleX(0.8887);">12.10.2025</div>
<svg style="left:1043px;top:848px;" width="23" height="19" viewBox="0 0 23 19"><path d="M1 1 H17 V12 H8 L4 15 V12 H1 Z" fill="#f0f0f0"/><path d="M4 4 H14 M4 7 H14 M4 9.5 H10" stroke="#1c1c1c" stroke-width="1"/><circle cx="15" cy="12" r="6.5" fill="#2a2a2a" stroke="#d0d0d0" stroke-width="1"/><text x="15" y="15.8" text-anchor="middle" font-family="Liberation Sans" font-weight="bold" font-size="10" fill="#f0f0f0">7</text></svg>
</body></html>
